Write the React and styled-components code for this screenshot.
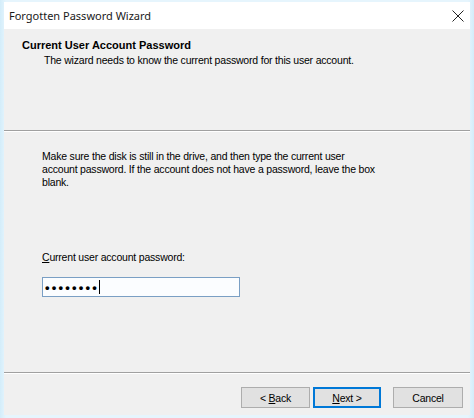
import React from "react";
import styled, { createGlobalStyle } from "styled-components";

const GlobalStyle = createGlobalStyle`
  html, body {
    margin: 0;
    padding: 0;
    background: #dcf0fb;
  }
  * {
    box-sizing: border-box;
  }
`;

const Frame = styled.div`
  width: 474px;
  height: 418px;
  padding: 2px 4px 3px 4px;
  background: linear-gradient(to right, #d3edfa, #e6f5fd 6px, #e6f5fd calc(100% - 6px), #d3edfa);
  display: flex;
`;

const Window = styled.div`
  flex: 1;
  display: flex;
  flex-direction: column;
  background: #f0f0f0;
  font-family: "Liberation Sans", Arial, sans-serif;
  font-size: 10.5px;
  letter-spacing: -0.2px;
  color: #000;
`;

const TitleBar = styled.div`
  height: 27px;
  background: #fff;
  display: flex;
  align-items: center;
  justify-content: space-between;
  padding: 0 6px 0 5px;
`;

const Title = styled.span`
  font-family: "Noto Sans", "Open Sans", sans-serif;
  font-size: 11px;
  letter-spacing: 0;
  color: #1a1a1a;
`;

const Close = styled.svg`
  width: 12px;
  height: 12px;
`;

const Header = styled.div`
  height: 101px;
  padding: 9px 0 0 18px;
`;

const Heading = styled.div`
  font-weight: bold;
  font-size: 11px;
  letter-spacing: 0;
  line-height: 14px;
`;

const SubTitle = styled.div`
  line-height: 14px;
  padding-left: 22px;
  margin-top: 1px;
`;

const Separator = styled.div`
  height: 2px;
  border-top: 1px solid #a0a0a0;
  border-bottom: 1px solid #ffffff;
`;

const Body = styled.div`
  flex: 1;
  padding: 18px 0 0 38px;
  display: flex;
  flex-direction: column;
`;

const Paragraph = styled.p`
  margin: 0;
  width: 350px;
  line-height: 13px;
`;

const Label = styled.div`
  margin-top: 62px;
  line-height: 13px;
`;

const Key = styled.span`
  text-decoration: underline;
`;

const PasswordBox = styled.div`
  margin-top: 13px;
  width: 198px;
  height: 20px;
  border: 1px solid #7a9fc4;
  background: #fbfdff;
  display: flex;
  align-items: center;
  padding-left: 2px;
`;

const Dots = styled.span`
  font-size: 13px;
  letter-spacing: 2.2px;
  font-weight: bold;
  line-height: 15px;
`;

const Caret = styled.span`
  width: 1px;
  height: 14px;
  background: #000;
`;

const Footer = styled.div`
  height: 41px;
  display: flex;
  justify-content: flex-end;
  align-items: flex-start;
  padding: 13px 7px 0 0;
`;

const Button = styled.button`
  width: ${(p) => p.w || 69}px;
  height: 21px;
  margin-left: ${(p) => p.gap || 0}px;
  font-family: "Liberation Sans", Arial, sans-serif;
  font-size: 10.5px;
  letter-spacing: -0.2px;
  color: #000;
  background: #e1e1e1;
  border: 1px solid ${(p) => (p.primary ? "#0078d7" : "#adadad")};
  box-shadow: ${(p) => (p.primary ? "inset 0 0 0 1px #0078d7" : "none")};
  padding: 0;
`;

export default function App() {
  return (
    <>
      <GlobalStyle />
      <Frame>
        <Window>
          <TitleBar>
            <Title>Forgotten Password Wizard</Title>
            <Close viewBox="0 0 12 12">
              <path d="M0.5 0.5 L11.5 11.5 M11.5 0.5 L0.5 11.5" stroke="#222" strokeWidth="1" fill="none" />
            </Close>
          </TitleBar>
          <Header>
            <Heading>Current User Account Password</Heading>
            <SubTitle>The wizard needs to know the current password for this user account.</SubTitle>
          </Header>
          <Separator />
          <Body>
            <Paragraph>
              Make sure the disk is still in the drive, and then type the current user
              <br />
              account password. If the account does not have a password, leave the box blank.
            </Paragraph>
            <Label>
              <Key>C</Key>urrent user account password:
            </Label>
            <PasswordBox>
              <Dots>••••••••</Dots>
              <Caret />
            </PasswordBox>
          </Body>
          <Separator />
          <Footer>
            <Button>
              &lt; <Key>B</Key>ack
            </Button>
            <Button primary gap={3} w={68}>
              <Key>N</Key>ext &gt;
            </Button>
            <Button gap={12} w={70}>
              Cancel
            </Button>
          </Footer>
        </Window>
      </Frame>
    </>
  );
}
